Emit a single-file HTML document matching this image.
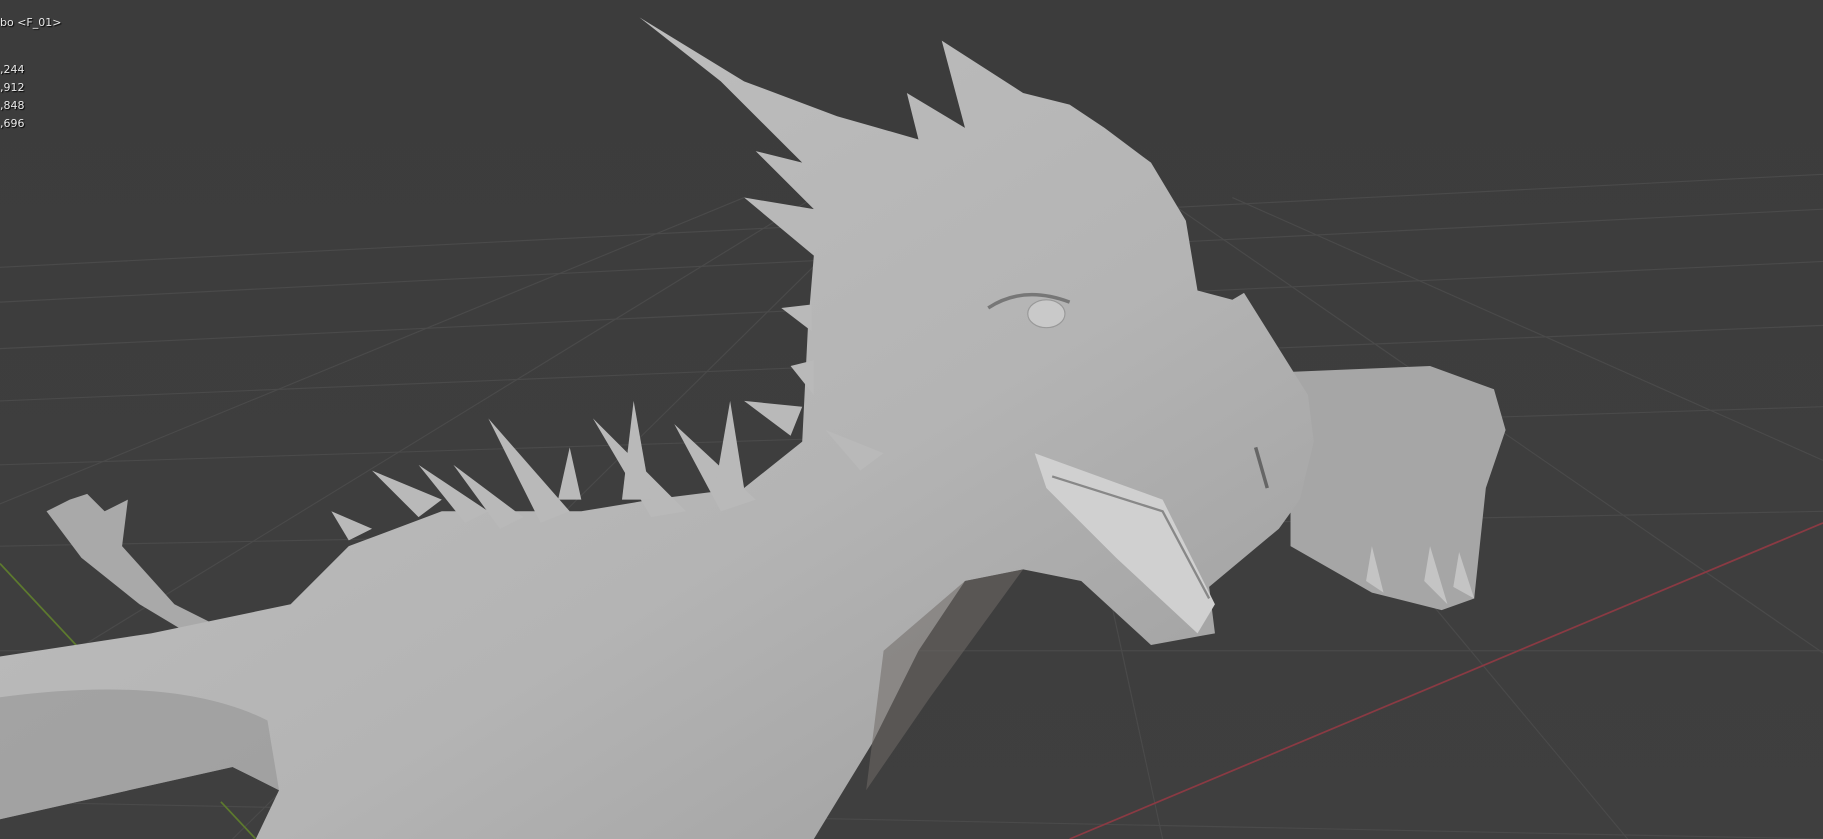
<!DOCTYPE html>
<html><head><meta charset="utf-8"><style>
html,body{margin:0;padding:0;background:#3d3d3d;overflow:hidden;width:1823px;height:839px}
svg{position:absolute;left:0;top:0}
.t{position:absolute;left:0;color:#e8e8e8;font:11px "DejaVu Sans","Liberation Sans",sans-serif;text-shadow:1px 1px 1px #000}
</style></head><body>
<svg width="1823" height="839" viewBox="0 0 1568 722" preserveAspectRatio="none">
<defs>
<linearGradient id="bg" x1="0" y1="0" x2="0" y2="1"><stop offset="0" stop-color="#3c3c3c"/><stop offset="1" stop-color="#3f3f3f"/></linearGradient>
<linearGradient id="sk" x1="0" y1="0" x2="1" y2="1"><stop offset="0" stop-color="#c2c2c2"/><stop offset="0.6" stop-color="#b4b4b4"/><stop offset="1" stop-color="#9c9c9c"/></linearGradient>
</defs>
<rect width="1568" height="722" fill="url(#bg)"/>
<g stroke="#4a4a4a" stroke-width="1" fill="none">
<path d="M0 230 L1568 150 M0 260 L1568 180 M0 300 L1568 225 M0 345 L1568 280 M0 400 L1568 350 M0 470 L1568 440 M0 560 L1568 560 M0 690 L1568 722"/>
<path d="M-200 722 L700 170 M200 722 L760 170 M600 722 L820 170 M1000 722 L880 170 M1400 722 L940 170 M1800 722 L1000 170 M2300 722 L1060 170 M-700 722 L640 170"/>
</g>
<path d="M920 722 L1568 450" stroke="#8a3a43" stroke-width="1.5"/>
<path d="M0 485 L70 560 M190 690 L220 722" stroke="#5d7a2e" stroke-width="1.5"/>
<path d="M40 440 L60 430 L75 425 L90 440 L110 430 L105 470 L150 520 L200 545 L170 550 L120 520 L70 480 Z" fill="#a9a9a9"/>
<path d="M1110 320 L1230 315 L1285 335 L1295 370 L1278 420 L1268 515 L1240 525 L1180 510 L1110 470 Z" fill="#a6a6a6"/>
<path d="M1180 470 L1190 510 L1175 500 Z M1230 470 L1245 520 L1225 500 Z M1255 475 L1268 515 L1250 505 Z" fill="#c4c4c4"/>
<path d="M0 565 L130 545 L250 520 L300 470 L380 440 L500 440 L560 430 L640 420 L690 380 L695 280 L700 220 L640 170 L700 180 L650 130 L690 140 L620 70 L550 15 L640 70 L720 100 L790 120 L780 80 L830 110 L810 35 L880 80 L920 90 L950 110 L990 140 L1020 190 L1030 250 L1060 258 L1070 252 L1100 300 L1125 340 L1130 380 L1118 430 L1100 455 L1040 505 L1045 545 L990 555 L930 500 L880 490 L830 500 L790 560 L750 640 L700 722 L220 722 L240 680 L200 660 L0 705 Z" fill="url(#sk)"/>
<g fill="#b9b9b9">
<path d="M320 405 L380 430 L360 445 Z"/><path d="M360 400 L420 440 L400 450 Z"/><path d="M390 400 L450 445 L430 455 Z"/>
<path d="M420 360 L490 440 L465 450 Z"/><path d="M510 360 L590 440 L560 445 Z"/><path d="M545 345 L560 430 L535 430 Z"/>
<path d="M580 365 L650 430 L620 440 Z"/><path d="M628 345 L640 420 L615 420 Z"/><path d="M490 385 L500 430 L480 430 Z"/>
<path d="M285 440 L320 455 L300 465 Z"/><path d="M640 345 L690 350 L680 375 Z"/><path d="M680 315 L700 310 L700 340 Z"/>
<path d="M672 265 L698 262 L698 285 Z"/><path d="M710 370 L760 390 L740 405 Z"/>
</g>
<path d="M0 600 Q150 580 230 620 L240 680 L200 660 L0 705 Z" fill="#8e8e8e" opacity="0.5"/>
<path d="M760 560 L830 500 L880 490 L800 600 L745 680 Z" fill="#6f6a66" opacity="0.55"/>
<path d="M890 390 L1000 430 L1045 520 L1030 545 L960 480 L900 420 Z" fill="#d0d0d0"/>
<path d="M905 410 L1000 440 L1040 515" stroke="#888" stroke-width="2" fill="none"/>
<ellipse cx="900" cy="270" rx="16" ry="12" fill="#c9c9c9" stroke="#999"/>
<path d="M850 265 Q880 245 920 260" stroke="#777" stroke-width="3" fill="none"/>
<path d="M1080 385 L1090 420" stroke="#666" stroke-width="3"/>
</svg>
<div class="t" style="top:16px">bo &lt;F_01&gt;</div>
<div class="t" style="top:63px">,244</div>
<div class="t" style="top:81px">,912</div>
<div class="t" style="top:99px">,848</div>
<div class="t" style="top:117px">,696</div>
</body></html>
